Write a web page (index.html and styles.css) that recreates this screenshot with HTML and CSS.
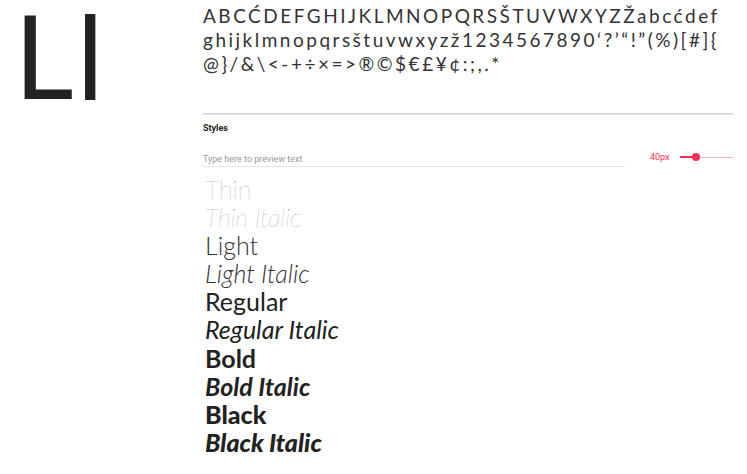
FILE: index.html
```html
<!DOCTYPE html>
<html>
<head>
<meta charset="utf-8">
<link rel="stylesheet" href="styles.css">
</head>
<body>
<div class="page">
  <div class="hero">Ll</div>
  <div class="main">
    <div class="glyphs">
      <div class="gline">ABCĆDEFGHIJKLMNOPQRSŠTUVWXYZŽabcćdef</div>
      <div class="gline">ghijklmnopqrsštuvwxyzž1234567890‘?’“!”(%)[#]{</div>
      <div class="gline">@}/&amp;\&lt;-+÷×=&gt;®©$€£¥¢:;,.*</div>
    </div>
    <div class="divider"></div>
    <div class="section-title">Styles</div>
    <div class="controls">
      <div class="preview-input">Type here to preview text</div>
      <div class="size">40px</div>
      <div class="slider">
        <div class="slider-fill"></div>
        <div class="slider-thumb"></div>
        <div class="slider-track"></div>
      </div>
    </div>
    <div class="styles">
      <div class="s w100">Thin</div>
      <div class="s w100 i">Thin Italic</div>
      <div class="s w300">Light</div>
      <div class="s w300 i">Light Italic</div>
      <div class="s w400">Regular</div>
      <div class="s w400 i">Regular Italic</div>
      <div class="s w700">Bold</div>
      <div class="s w700 i">Bold Italic</div>
      <div class="s w900">Black</div>
      <div class="s w900 i">Black Italic</div>
    </div>
  </div>
</div>
</body>
</html>
```
FILE: styles.css
```css
html, body {
  margin: 0;
  padding: 0;
  background: #fff;
}
.page {
  display: flex;
  width: 747px;
  height: 474px;
  overflow: hidden;
  font-family: Lato, "Liberation Sans", sans-serif;
  color: #222;
}
.hero {
  width: 203px;
  flex: none;
  box-sizing: border-box;
  padding-left: 14px;
  font-size: 116px;
  line-height: 0.95;
  font-weight: 400;
  color: #222;
  letter-spacing: 3px;
}
.main {
  flex: 1;
  padding-right: 14px;
}
.glyphs {
  margin-top: 4px;
  font-size: 19px;
  line-height: 24px;
  letter-spacing: 2.5px;
  color: #333;
}
.gline {
  white-space: nowrap;
}
.divider {
  margin-top: 37px;
  height: 1px;
  border-top: 1px solid #ccc;
  background: #e6e6e6;
}
.section-title {
  font-family: Roboto, sans-serif;
  font-weight: 700;
  font-size: 9px;
  margin-top: 8px;
  color: #222;
}
.controls {
  display: flex;
  align-items: center;
  margin-top: 18px;
}
.preview-input {
  width: 422px;
  font-family: Roboto, sans-serif;
  font-size: 9px;
  color: #999;
  border-bottom: 1px solid #e6e6e6;
  padding-bottom: 2px;
  padding-top: 3px;
}
.size {
  font-family: Roboto, sans-serif;
  font-size: 9px;
  color: #ff2d55;
  margin-left: 25px;
  margin-top: -4px;
}
.slider {
  position: relative;
  flex: 1;
  height: 10px;
  margin-left: 10px;
  margin-top: -4px;
}
.slider-fill {
  position: absolute;
  left: 0;
  top: 4px;
  width: 16px;
  height: 2px;
  background: #ff2d55;
}
.slider-track {
  position: absolute;
  left: 16px;
  right: 0;
  top: 4.5px;
  height: 1px;
  background: #ffb3c1;
}
.slider-thumb {
  position: absolute;
  left: 12px;
  top: 1px;
  width: 8px;
  height: 8px;
  border-radius: 50%;
  background: #ff2d55;
  z-index: 1;
}
.styles {
  margin-top: 8px;
  padding-left: 2px;
}
.s {
  font-size: 25px;
  line-height: 28.1px;
  white-space: nowrap;
}
.i { font-style: italic; }
.w100 { font-weight: 200; color: #888; }
.w300 { font-weight: 300; color: #333; }
.w400 { font-weight: 400; color: #222; }
.w700 { font-weight: 700; color: #222; }
.w900 { font-weight: 900; color: #222; }
```
